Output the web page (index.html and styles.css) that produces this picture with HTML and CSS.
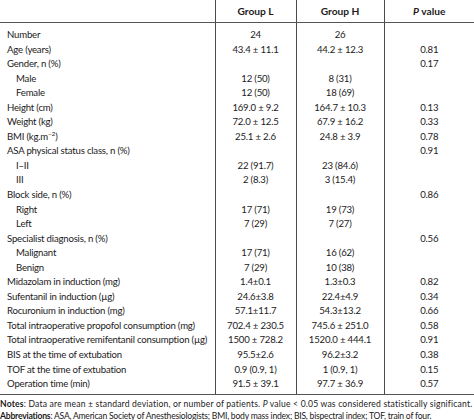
FILE: index.html
```html
<!DOCTYPE html>
<html>
<head>
<meta charset="utf-8">
<link rel="stylesheet" href="styles.css">
</head>
<body>
<table class="data">
  <colgroup>
    <col class="c-label"><col class="c-l"><col class="c-h"><col class="c-p">
  </colgroup>
  <thead>
    <tr><th></th><th>Group L</th><th>Group H</th><th><i>P</i> value</th></tr>
  </thead>
  <tbody>
    <tr class="first"><td>Number</td><td>24</td><td>26</td><td></td></tr>
    <tr><td>Age (years)</td><td>43.4 ± 11.1</td><td>44.2 ± 12.3</td><td>0.81</td></tr>
    <tr><td>Gender, n (%)</td><td></td><td></td><td>0.17</td></tr>
    <tr><td class="sub">Male</td><td>12 (50)</td><td>8 (31)</td><td></td></tr>
    <tr><td class="sub">Female</td><td>12 (50)</td><td>18 (69)</td><td></td></tr>
    <tr><td>Height (cm)</td><td>169.0 ± 9.2</td><td>164.7 ± 10.3</td><td>0.13</td></tr>
    <tr><td>Weight (kg)</td><td>72.0 ± 12.5</td><td>67.9 ± 16.2</td><td>0.33</td></tr>
    <tr><td>BMI (kg.m<sup>−2</sup>)</td><td>25.1 ± 2.6</td><td>24.8 ± 3.9</td><td>0.78</td></tr>
    <tr><td>ASA physical status class, n (%)</td><td></td><td></td><td>0.91</td></tr>
    <tr><td class="sub">I–II</td><td>22 (91.7)</td><td>23 (84.6)</td><td></td></tr>
    <tr><td class="sub">III</td><td>2 (8.3)</td><td>3 (15.4)</td><td></td></tr>
    <tr><td>Block side, n (%)</td><td></td><td></td><td>0.86</td></tr>
    <tr><td class="sub">Right</td><td>17 (71)</td><td>19 (73)</td><td></td></tr>
    <tr><td class="sub">Left</td><td>7 (29)</td><td>7 (27)</td><td></td></tr>
    <tr><td>Specialist diagnosis, n (%)</td><td></td><td></td><td>0.56</td></tr>
    <tr><td class="sub">Malignant</td><td>17 (71)</td><td>16 (62)</td><td></td></tr>
    <tr><td class="sub">Benign</td><td>7 (29)</td><td>10 (38)</td><td></td></tr>
    <tr><td>Midazolam in induction (mg)</td><td>1.4±0.1</td><td>1.3±0.3</td><td>0.82</td></tr>
    <tr><td>Sufentanil in induction (µg)</td><td>24.6±3.8</td><td>22.4±4.9</td><td>0.34</td></tr>
    <tr><td>Rocuronium in induction (mg)</td><td>57.1±11.7</td><td>54.3±13.2</td><td>0.66</td></tr>
    <tr><td>Total intraoperative propofol consumption (mg)</td><td>702.4 ± 230.5</td><td>745.6 ± 251.0</td><td>0.58</td></tr>
    <tr><td>Total intraoperative remifentanil consumption (µg)</td><td>1500 ± 728.2</td><td>1520.0 ± 444.1</td><td>0.91</td></tr>
    <tr><td>BIS at the time of extubation</td><td>95.5±2.6</td><td>96.2±3.2</td><td>0.38</td></tr>
    <tr><td>TOF at the time of extubation</td><td>0.9 (0.9, 1)</td><td>1 (0.9, 1)</td><td>0.15</td></tr>
    <tr class="last"><td>Operation time (min)</td><td>91.5 ± 39.1</td><td>97.7 ± 36.9</td><td>0.57</td></tr>
  </tbody>
</table>
<div class="notes">
  <p class="note"><b>Notes</b>: Data are mean ± standard deviation, or number of patients. <i>P</i> value &lt; 0.05 was considered statistically significant.</p>
  <p class="abbr"><b>Abbreviations</b>: ASA, American Society of Anesthesiologists; BMI, body mass index; BIS, bispectral index; TOF, train of four.</p>
</div>
</body>
</html>
```
FILE: styles.css
```css
html, body {
  margin: 0;
  padding: 0;
  background: #ffffff;
}
body {
  width: 474px;
  font-family: "Lato", "Liberation Sans", sans-serif;
  color: #1c1a1b;
}
.data {
  width: 474px;
  border-collapse: collapse;
  table-layout: fixed;
  font-size: 9.6px;
  letter-spacing: -0.2px;
}
.c-label { width: 215px; }
.c-l { width: 81px; }
.c-h { width: 88px; }
.c-p { width: 90px; }
.data th {
  height: 22px;
  padding: 0;
  font-size: 10.2px;
  letter-spacing: 0;
  font-weight: bold;
  text-align: center;
  border-bottom: 1px solid #555;
  vertical-align: middle;
}
.data td {
  height: 14.54px;
  padding: 0;
  text-align: center;
  vertical-align: middle;
  line-height: 14.54px;
  white-space: nowrap;
}
.data th + th, .data td + td {
  border-left: 1px solid #4a4a4a;
}
.data td:first-child {
  text-align: left;
  padding-left: 7px;
}
.data td.sub {
  padding-left: 16px;
}
.data tr.first td {
  padding-top: 5px;
}
.data tr.last td {
  padding-bottom: 2px;
  border-bottom: 1px solid #555;
}
sup {
  font-size: 6.5px;
  line-height: 0;
  vertical-align: 4px;
}
.notes {
  font-size: 8.6px;
  line-height: 12px;
  padding-top: 3px;
}
.notes p {
  margin: 0;
  white-space: nowrap;
}
.notes .note {
  letter-spacing: 0.18px;
}
.notes .abbr {
  letter-spacing: -0.22px;
}
```
